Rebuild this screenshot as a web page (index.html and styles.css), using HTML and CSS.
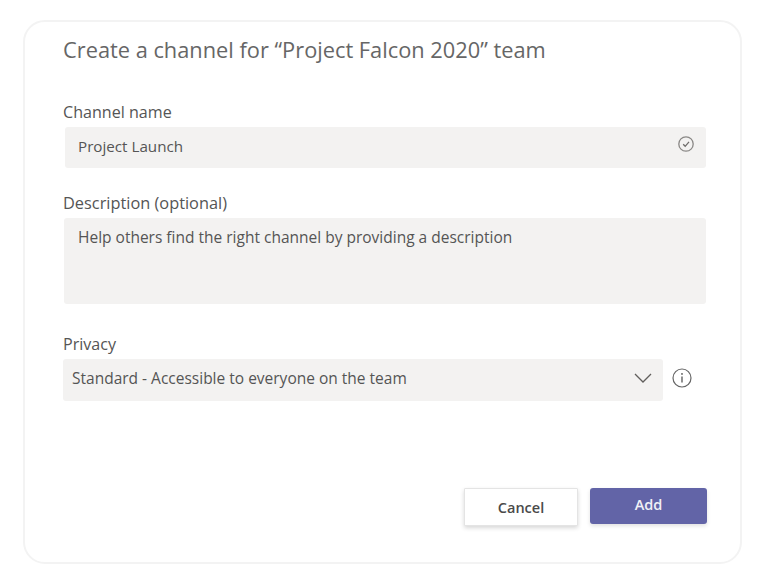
FILE: index.html
```html
<!DOCTYPE html>
<html lang="en">
<head>
<meta charset="utf-8">
<title>Create a channel</title>
<link rel="stylesheet" href="styles.css">
</head>
<body>
<main class="card">
  <h1 class="title">Create a channel for “Project Falcon 2020” team</h1>
  <div class="label label-name">Channel name</div>
  <div class="field field-name">
    <span class="name-value">Project Launch</span>
    <svg class="check" width="16" height="16" viewBox="0 0 16 16" fill="none"><circle cx="8" cy="8" r="7.2" stroke="#8a8886" stroke-width="1.3"/><path d="M5.2 8.3l2 2 3.8-4.4" stroke="#6e6c6a" stroke-width="1.3"/></svg>
  </div>
  <div class="label label-desc">Description (optional)</div>
  <div class="field field-desc">Help others find the right channel by providing a description</div>
  <div class="label label-privacy">Privacy</div>
  <div class="privacy-row">
    <div class="select">
      <span>Standard - Accessible to everyone on the team</span>
      <svg width="18" height="10" viewBox="0 0 18 10" fill="none"><path d="M1 1l8 8 8-8" stroke="#605e5c" stroke-width="1.3"/></svg>
    </div>
    <svg class="info" width="20" height="20" viewBox="0 0 20 20" fill="none"><circle cx="10" cy="10" r="9" stroke="#666" stroke-width="1.2"/><path d="M10 8.6v6" stroke="#555" stroke-width="1.3"/><circle cx="10" cy="5.9" r="0.9" fill="#555"/></svg>
  </div>
  <div class="actions">
    <button class="btn btn-cancel" type="button">Cancel</button>
    <button class="btn btn-add" type="button">Add</button>
  </div>
</main>
</body>
</html>
```
FILE: styles.css
```css
* { box-sizing: border-box; }
html, body { margin: 0; height: 100%; background: #fff; }
body {
  padding: 20px 26px 18px 23px;
  font-family: "Open Sans", "Noto Sans", sans-serif;
  color: #555;
}
.card {
  width: 719px;
  height: 544px;
  border: 2px solid #f3f3f3;
  border-radius: 22px;
  background: #fff;
  padding: 13px 33px 0 38px;
  display: flex;
  flex-direction: column;
  align-items: flex-start;
}
.title {
  margin: 0;
  font-size: 21.8px;
  line-height: 30px;
  font-weight: 400;
  color: #666;
  white-space: nowrap;
}
.label {
  font-size: 16.1px;
  line-height: 20px;
  color: #555;
  white-space: nowrap;
}
.label-name { margin-top: 37px; }
.label-desc { margin-top: 25px; font-size: 16.35px; }
.label-privacy { margin-top: 30px; }
.field, .select {
  background: #f3f2f1;
  border-radius: 3px;
  font-size: 15.5px;
  color: #555;
  white-space: nowrap;
}
.field { width: 641px; margin-left: 2px; padding-left: 13px; }
.field-name {
  height: 41px;
  margin-top: 5px;
  padding-right: 12px;
  padding-bottom: 4px;
  display: flex;
  align-items: center;
  justify-content: space-between;
}
.name-value { font-size: 15.2px; }
.check { margin-top: -4px; }
.field-desc {
  height: 86px;
  margin-top: 5px;
  margin-left: 1px;
  width: 642px;
  padding-left: 14px;
  padding-top: 9px;
  line-height: 21px;
}
.privacy-row {
  margin-top: 5px;
  display: flex;
  align-items: center;
  gap: 9px;
}
.select {
  width: 600px;
  height: 42px;
  padding: 0 11px 4px 9px;
  display: flex;
  align-items: center;
  justify-content: space-between;
}
.info { margin-bottom: 4px; }
.actions {
  margin-top: 87px;
  align-self: flex-end;
  width: 243px;
  display: flex;
  gap: 12px;
  align-items: flex-start;
}
.btn {
  font-family: inherit;
  font-size: 14.5px;
  font-weight: 600;
  padding: 0;
  border-radius: 3px;
}
.btn-cancel {
  width: 114px;
  height: 38px;
  background: #fff;
  color: #4a4a4a;
  border: 1px solid #e4e4e4;
  border-radius: 1px;
  box-shadow: 0 2px 4px rgba(0, 0, 0, 0.16);
}
.btn-add {
  width: 117px;
  height: 36px;
  background: #6264a7;
  color: #f1f1f6;
  border: 0;
  padding-bottom: 3px;
  box-shadow: 0 2px 4px rgba(0, 0, 0, 0.12);
}
```
